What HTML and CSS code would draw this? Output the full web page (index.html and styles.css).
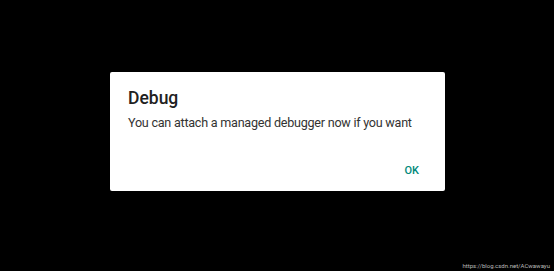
FILE: index.html
```html
<!DOCTYPE html>
<html>
<head>
<meta charset="utf-8">
<link rel="stylesheet" href="styles.css">
</head>
<body>
<div class="screen">
  <div class="dialog">
    <div class="title">Debug</div>
    <div class="message">You can attach a managed debugger now if you want</div>
    <div class="actions"><span class="btn">OK</span></div>
  </div>
  <div class="watermark">https://blog.csdn.net/ACwawayu</div>
</div>
</body>
</html>
```
FILE: styles.css
```css
html, body {
  margin: 0;
  padding: 0;
  background: #000;
}
.screen {
  position: relative;
  width: 554px;
  height: 271px;
  background: #000;
  overflow: hidden;
  font-family: Roboto, "Liberation Sans", sans-serif;
}
.dialog {
  position: absolute;
  left: 110px;
  top: 72px;
  width: 335px;
  height: 119px;
  background: #fff;
  border-radius: 2px;
  box-sizing: border-box;
  padding: 16px 18px 0 18px;
  display: flex;
  flex-direction: column;
}
.title {
  font-size: 17.5px;
  font-weight: 500;
  color: #212121;
  line-height: 20px;
}
.message {
  margin-top: 7px;
  font-size: 12.6px;
  letter-spacing: -0.25px;
  color: #333;
  line-height: 16px;
  white-space: nowrap;
}
.actions {
  margin-top: 33px;
  display: flex;
  justify-content: flex-end;
  padding-right: 8px;
}
.btn {
  font-size: 11px;
  font-weight: 500;
  color: #00897b;
  line-height: 14px;
}
.watermark {
  position: absolute;
  right: 4px;
  bottom: 2px;
  font-size: 6px;
  color: #bbb;
}
```
